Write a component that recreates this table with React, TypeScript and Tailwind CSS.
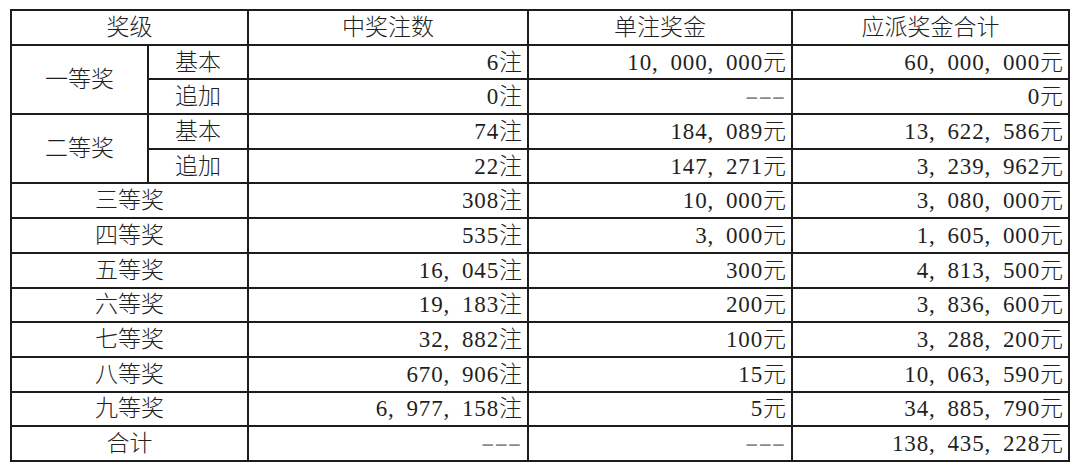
const font = { fontFamily: '"Liberation Serif", "Noto Sans CJK SC", serif' };

type Row = { name: string; count: string; unit: string; total: string };

const simpleRows: Row[] = [
  { name: "三等奖", count: "308注", unit: "10, 000元", total: "3, 080, 000元" },
  { name: "四等奖", count: "535注", unit: "3, 000元", total: "1, 605, 000元" },
  { name: "五等奖", count: "16, 045注", unit: "300元", total: "4, 813, 500元" },
  { name: "六等奖", count: "19, 183注", unit: "200元", total: "3, 836, 600元" },
  { name: "七等奖", count: "32, 882注", unit: "100元", total: "3, 288, 200元" },
  { name: "八等奖", count: "670, 906注", unit: "15元", total: "10, 063, 590元" },
  { name: "九等奖", count: "6, 977, 158注", unit: "5元", total: "34, 885, 790元" },
  { name: "合计", count: "---", unit: "---", total: "138, 435, 228元" },
];

const cell = "border-2 border-[#1c1c1c] h-[34.7px] p-0 leading-none";
const num = `${cell} text-right pr-[4px] tracking-[0.9px] [word-spacing:5px]`;

function Val({ v }: { v: string }) {
  if (v === "---") {
    return (
      <span className="inline-block tracking-[0px] text-[#8a8a8a] scale-x-[1.75] origin-right pr-[1px]">
        ---
      </span>
    );
  }
  return <>{v}</>;
}

export default function App() {
  return (
    <div className="w-[1080px] h-[466px] bg-white pt-[9px] pl-[10px] overflow-hidden">
      <table
        className="border-collapse table-fixed w-[1058px] text-[23px] font-light text-[#1f1f1f]"
        style={font}
      >
        <colgroup>
          <col className="w-[137px]" />
          <col className="w-[100px]" />
          <col className="w-[280px]" />
          <col className="w-[264px]" />
          <col className="w-[277px]" />
        </colgroup>
        <tbody>
          <tr>
            <td colSpan={2} className={`${cell} text-center`}>奖级</td>
            <td className={`${cell} text-center`}>中奖注数</td>
            <td className={`${cell} text-center`}>单注奖金</td>
            <td className={`${cell} text-center`}>应派奖金合计</td>
          </tr>

          {/* 一等奖 */}
          <tr>
            <td rowSpan={2} className={`${cell} text-center`}>一等奖</td>
            <td className={`${cell} text-center`}>基本</td>
            <td className={num}>6注</td>
            <td className={num}>10, 000, 000元</td>
            <td className={num}>60, 000, 000元</td>
          </tr>
          <tr>
            <td className={`${cell} text-center`}>追加</td>
            <td className={num}>0注</td>
            <td className={num}><Val v="---" /></td>
            <td className={num}>0元</td>
          </tr>

          {/* 二等奖 */}
          <tr>
            <td rowSpan={2} className={`${cell} text-center`}>二等奖</td>
            <td className={`${cell} text-center`}>基本</td>
            <td className={num}>74注</td>
            <td className={num}>184, 089元</td>
            <td className={num}>13, 622, 586元</td>
          </tr>
          <tr>
            <td className={`${cell} text-center`}>追加</td>
            <td className={num}>22注</td>
            <td className={num}>147, 271元</td>
            <td className={num}>3, 239, 962元</td>
          </tr>

          {simpleRows.map((r) => (
            <tr key={r.name}>
              <td colSpan={2} className={`${cell} text-center`}>{r.name}</td>
              <td className={num}><Val v={r.count} /></td>
              <td className={num}><Val v={r.unit} /></td>
              <td className={num}><Val v={r.total} /></td>
            </tr>
          ))}
        </tbody>
      </table>
    </div>
  );
}
